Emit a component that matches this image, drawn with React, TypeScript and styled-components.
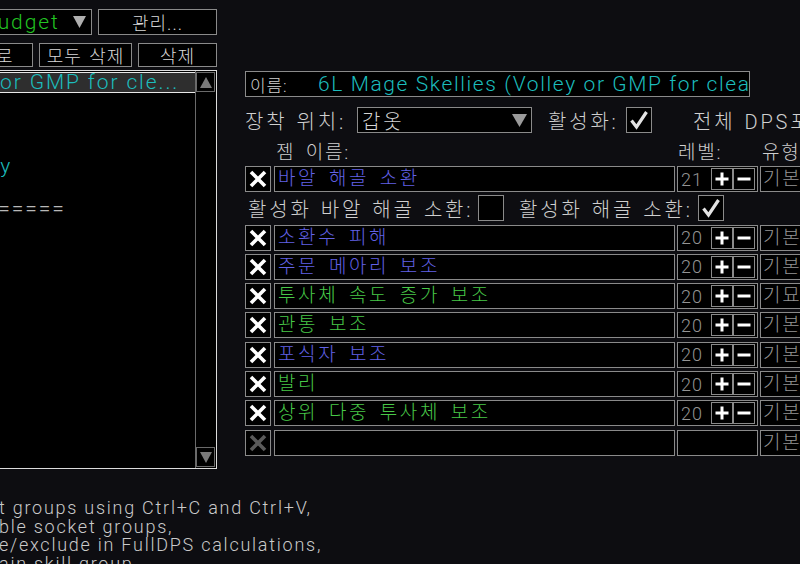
import React from "react";
import styled, { createGlobalStyle } from "styled-components";

const FONT = `Roboto, "Noto Sans CJK KR", sans-serif`;
const BORDER = "#8a8a8a";
const BLUE = "#6262e6";
const GREEN = "#48c848";
const CYAN = "#1cbcbc";

const GlobalStyle = createGlobalStyle`
  html, body {
    margin: 0;
    padding: 0;
    background: #0d0d11;
    overflow: hidden;
  }
  #root {
    width: 800px;
    height: 564px;
    overflow: hidden;
  }
  * {
    box-sizing: border-box;
  }
`;

const Page = styled.div`
  width: 800px;
  height: 564px;
  overflow: hidden;
  padding-top: 9px;
  display: flex;
  flex-direction: column;
  font-family: ${FONT};
  font-weight: 300;
  color: #d0d0d0;
`;

const Workspace = styled.div`
  display: flex;
  align-items: flex-start;
`;

/* left side: skill set select + socket group list (cropped on the left) */
const LeftColumn = styled.div`
  flex: 0 0 499px;
  margin-left: -282px;
  display: flex;
  flex-direction: column;
`;

const ToolRow = styled.div<{ $height: number; $top: number }>`
  display: flex;
  justify-content: flex-end;
  gap: 6px;
  height: ${(p) => p.$height}px;
  margin-top: ${(p) => p.$top}px;
`;

const SetSelect = styled.div`
  flex: 1;
  display: flex;
  align-items: center;
  padding: 0 5px 0 19px;
  border: 1px solid ${BORDER};
  background: #000;
  font-size: 21px;
  letter-spacing: 1.9px;
  color: #22c422;
  white-space: pre;
  overflow: hidden;

  .value {
    flex: 1;
    overflow: hidden;
  }
`;

const ActionButton = styled.button<{ $width: number }>`
  flex: 0 0 ${(p) => p.$width}px;
  padding: 0;
  display: flex;
  align-items: center;
  justify-content: center;
  border: 1px solid ${BORDER};
  background: #000;
  color: #d8d8d8;
  font-family: ${FONT};
  font-weight: 300;
  font-size: 18px;
  letter-spacing: 1px;
  word-spacing: 2px;
  white-space: nowrap;
  overflow: hidden;
`;

const ListPanel = styled.div`
  height: 399px;
  margin-top: 3px;
  display: flex;
  border: 1px solid #dcdcdc;
  background: #000;
`;

const ListItems = styled.div`
  flex: 1;
  padding-top: 1px;
  overflow: hidden;
`;

const ListRow = styled.div<{ $selected?: boolean; $color: string }>`
  height: 21px;
  line-height: 21px;
  padding-left: 8px;
  font-size: 21px;
  letter-spacing: 1.9px;
  white-space: pre;
  overflow: hidden;
  color: ${(p) => p.$color};
  background: ${(p) => (p.$selected ? "#2e2e2e" : "transparent")};
  box-shadow: ${(p) =>
    p.$selected ? "inset 0 1px #e8e8e8, inset 0 -1px #e8e8e8" : "none"};
`;

const ScrollTrack = styled.div`
  flex: 0 0 21px;
  display: flex;
  flex-direction: column;
  justify-content: space-between;
  padding: 1px 1px 1px 0;
  border-left: 1px solid #6a6a6a;
`;

const ScrollButton = styled.div`
  height: 20px;
  display: flex;
  align-items: center;
  justify-content: center;
  border: 1px solid #6a6a6a;
`;

/* right side: socket group editor */
const RightColumn = styled.div`
  flex: 0 0 620px;
  margin-left: 28px;
  margin-top: 62px;
  display: flex;
  flex-direction: column;
`;

const NameField = styled.div`
  width: 505px;
  height: 26px;
  display: flex;
  align-items: center;
  padding-left: 4px;
  border: 1px solid ${BORDER};
  background: #000;
  white-space: nowrap;
  overflow: hidden;
`;

const NamePrompt = styled.span`
  flex: 0 0 68px;
  font-size: 17px;
  letter-spacing: 0.8px;
  color: #cfcfcf;
`;

const NameValue = styled.span`
  font-size: 21px;
  letter-spacing: 1.6px;
  color: ${CYAN};
`;

const ControlRow = styled.div<{ $top: number }>`
  height: 26px;
  margin-top: ${(p) => p.$top}px;
  display: flex;
  align-items: center;
`;

const Label = styled.span<{ $width?: number; $left?: number }>`
  flex: 0 0 ${(p) => (p.$width ? `${p.$width}px` : "auto")};
  margin-left: ${(p) => p.$left ?? 0}px;
  font-size: 20px;
  letter-spacing: 2.8px;
  word-spacing: 1.5px;
  color: #d0d0d0;
  white-space: nowrap;
`;

const SlotSelect = styled.div`
  flex: 0 0 175px;
  height: 26px;
  display: flex;
  align-items: center;
  padding: 0 4px;
  border: 1px solid ${BORDER};
  background: #000;
  font-size: 20px;
  letter-spacing: 2.8px;
  color: #d4d4d4;

  .value {
    flex: 1;
  }
`;

const CheckBox = styled.div`
  flex: 0 0 26px;
  height: 26px;
  display: flex;
  align-items: center;
  justify-content: center;
  border: 1px solid ${BORDER};
  background: #000;
`;

const HeaderRow = styled.div`
  height: 26px;
  margin-top: 4px;
  display: flex;
  align-items: center;
  font-size: 19px;
  letter-spacing: 1.8px;
  word-spacing: 4px;
  color: #cfcfcf;
  white-space: nowrap;
`;

const HeaderCell = styled.span<{ $width: number }>`
  flex: 0 0 ${(p) => p.$width}px;
`;

const GemList = styled.div`
  margin-top: 3px;
  display: flex;
  flex-direction: column;
  gap: 3.3px;
`;

const GemRow = styled.div`
  height: 26px;
  display: flex;
`;

const RemoveButton = styled.div`
  flex: 0 0 26px;
  margin-right: 3px;
  display: flex;
  align-items: center;
  justify-content: center;
  border: 1px solid ${BORDER};
  background: #000;
`;

const GemNameBox = styled.div<{ $color: string }>`
  flex: 0 0 401px;
  margin-right: 2px;
  padding-left: 3px;
  border: 1px solid ${BORDER};
  background: #000;
  font-size: 19px;
  letter-spacing: 2.6px;
  word-spacing: 3.5px;
  line-height: 24px;
  color: ${(p) => p.$color};
  white-space: nowrap;
`;

const LevelBox = styled.div`
  flex: 0 0 81px;
  margin-right: 2px;
  display: flex;
  align-items: center;
  padding: 0 1px 0 3px;
  border: 1px solid ${BORDER};
  background: #000;
`;

const LevelValue = styled.span`
  flex: 0 0 30px;
  font-size: 18px;
  letter-spacing: 1px;
  color: #949494;
`;

const StepButton = styled.div`
  flex: 0 0 22px;
  height: 22px;
  display: flex;
  align-items: center;
  justify-content: center;
  border: 1px solid ${BORDER};
  background: #000;
`;

const TypeBox = styled.div`
  flex: 0 0 90px;
  padding-left: 2px;
  border: 1px solid ${BORDER};
  background: #000;
  font-size: 19px;
  letter-spacing: 1.8px;
  line-height: 24px;
  color: #949494;
  white-space: nowrap;
  overflow: hidden;
`;

const HelpText = styled.div`
  margin-top: 30px;
  margin-left: -1px;
  font-size: 18px;
  letter-spacing: 1.75px;
  line-height: 18.5px;
  color: #cacaca;
  white-space: pre;
`;

/* drawings */
const Triangle = ({ dir, w, h, color }: { dir: "up" | "down"; w: number; h: number; color: string }) => (
  <svg width={w} height={h} viewBox={`0 0 ${w} ${h}`}>
    <polygon
      points={dir === "down" ? `0,0 ${w},0 ${w / 2},${h}` : `0,${h} ${w},${h} ${w / 2},0`}
      fill={color}
    />
  </svg>
);

const CrossIcon = ({ color }: { color: string }) => (
  <svg width="18" height="18" viewBox="0 0 18 18">
    <path d="M2 2 L16 16 M16 2 L2 16" stroke={color} strokeWidth="3.6" />
  </svg>
);

const PlusIcon = () => (
  <svg width="16" height="16" viewBox="0 0 16 16">
    <path d="M1.5 8 H14.5 M8 1.5 V14.5" stroke="#fff" strokeWidth="3" />
  </svg>
);

const MinusIcon = () => (
  <svg width="16" height="16" viewBox="0 0 16 16">
    <path d="M1.5 8 H14.5" stroke="#fff" strokeWidth="3" />
  </svg>
);

const CheckIcon = () => (
  <svg width="22" height="22" viewBox="0 0 22 22">
    <path d="M3.5 11.5 L8.5 18 L18.5 3" stroke="#e4e4e4" strokeWidth="3.2" fill="none" />
  </svg>
);

type Gem = {
  name: string;
  color: string;
  level?: number;
  type: string;
  empty?: boolean;
};

const topGems: Gem[] = [{ name: "바알 해골 소환", color: BLUE, level: 21, type: "기본" }];

const supportGems: Gem[] = [
  { name: "소환수 피해", color: BLUE, level: 20, type: "기본" },
  { name: "주문 메아리 보조", color: BLUE, level: 20, type: "기본" },
  { name: "투사체 속도 증가 보조", color: GREEN, level: 20, type: "기묘한" },
  { name: "관통 보조", color: GREEN, level: 20, type: "기본" },
  { name: "포식자 보조", color: BLUE, level: 20, type: "기본" },
  { name: "발리", color: GREEN, level: 20, type: "기본" },
  { name: "상위 다중 투사체 보조", color: GREEN, level: 20, type: "기본" },
  { name: "", color: GREEN, type: "기본", empty: true },
];

const groups = [
  { text: "6L Mage Skellies (Volley or GMP for cle...", color: CYAN, selected: true },
  { text: "Flame Dash", color: "#c8c8c8" },
  { text: "Vaal Haste", color: "#c8c8c8" },
  { text: "Summon Raging Spirit", color: "#c8c8c8" },
  { text: "4L Mage Skellies w/Volley", color: CYAN },
  { text: "Convocation", color: "#c8c8c8" },
  { text: "=== Guard / Movement ======", color: "#b8b8b8" },
];

const helpLines = [
  "t groups using Ctrl+C and Ctrl+V,",
  "ble socket groups,",
  "e/exclude in FullDPS calculations,",
  "ain skill group.",
];

const GemLine = ({ gem }: { gem: Gem }) => (
  <GemRow>
    <RemoveButton>
      <CrossIcon color={gem.empty ? "#5a5a5a" : "#ffffff"} />
    </RemoveButton>
    <GemNameBox $color={gem.color}>{gem.name}</GemNameBox>
    <LevelBox>
      {!gem.empty && (
        <>
          <LevelValue>{gem.level}</LevelValue>
          <StepButton>
            <PlusIcon />
          </StepButton>
          <StepButton>
            <MinusIcon />
          </StepButton>
        </>
      )}
    </LevelBox>
    <TypeBox>{gem.type}</TypeBox>
  </GemRow>
);

export default function App() {
  return (
    <>
      <GlobalStyle />
      <Page>
        <Workspace>
          <LeftColumn>
            <ToolRow $height={26} $top={0}>
              <SetSelect>
                <span className="value">Default Lv95 Mapping Budget</span>
                <Triangle dir="down" w={13} h={12} color="#b0b0b0" />
              </SetSelect>
              <ActionButton $width={119}>관리...</ActionButton>
            </ToolRow>
            <ToolRow $height={24} $top={8}>
              <ActionButton $width={74}>새로</ActionButton>
              <ActionButton $width={93}>모두 삭제</ActionButton>
              <ActionButton $width={79}>삭제</ActionButton>
            </ToolRow>
            <ListPanel>
              <ListItems>
                {groups.map((g) => (
                  <ListRow key={g.text} $selected={g.selected} $color={g.color}>
                    {g.text}
                  </ListRow>
                ))}
              </ListItems>
              <ScrollTrack>
                <ScrollButton>
                  <Triangle dir="up" w={12} h={11} color="#7a7a7a" />
                </ScrollButton>
                <ScrollButton>
                  <Triangle dir="down" w={12} h={11} color="#7a7a7a" />
                </ScrollButton>
              </ScrollTrack>
            </ListPanel>
          </LeftColumn>

          <RightColumn>
            <NameField>
              <NamePrompt>이름:</NamePrompt>
              <NameValue>6L Mage Skellies (Volley or GMP for clear)</NameValue>
            </NameField>

            <ControlRow $top={10}>
              <Label $width={112}>장착 위치:</Label>
              <SlotSelect>
                <span className="value">갑옷</span>
                <Triangle dir="down" w={15} h={13} color="#9a9a9a" />
              </SlotSelect>
              <Label $width={78} $left={16}>활성화:</Label>
              <CheckBox>
                <CheckIcon />
              </CheckBox>
              <Label $left={41}>전체 DPS포함:</Label>
            </ControlRow>

            <HeaderRow>
              <HeaderCell $width={31} />
              <HeaderCell $width={402}>젬 이름:</HeaderCell>
              <HeaderCell $width={84}>레벨:</HeaderCell>
              <HeaderCell $width={60}>유형:</HeaderCell>
            </HeaderRow>

            <GemList>
              {topGems.map((g) => (
                <GemLine key={g.name} gem={g} />
              ))}
              <ControlRow $top={0}>
                <Label $width={230} $left={3}>활성화 바알 해골 소환:</Label>
                <CheckBox />
                <Label $width={179} $left={15}>활성화 해골 소환:</Label>
                <CheckBox>
                  <CheckIcon />
                </CheckBox>
              </ControlRow>
              {supportGems.map((g, i) => (
                <GemLine key={i} gem={g} />
              ))}
            </GemList>
          </RightColumn>
        </Workspace>

        <HelpText>
          {helpLines.map((line) => (
            <div key={line}>{line}</div>
          ))}
        </HelpText>
      </Page>
    </>
  );
}
